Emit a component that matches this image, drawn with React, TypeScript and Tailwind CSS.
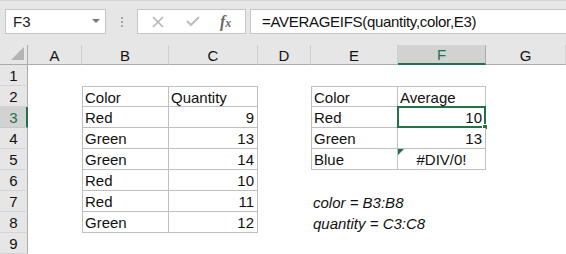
import React from "react";

const COLS = ["A", "B", "C", "D", "E", "F", "G"];
const ROWS = [1, 2, 3, 4, 5, 6, 7, 8, 9];

const font = { fontFamily: '"Liberation Sans", Arial, sans-serif' };

type Cell = {
  text?: string;
  align?: "left" | "right" | "center";
  head?: boolean;
  table?: boolean;
  first?: boolean;
  top?: boolean;
  italic?: boolean;
  selected?: boolean;
  flag?: boolean;
};

function buildCells(): Record<string, Cell> {
  const c: Record<string, Cell> = {};
  const left = [
    ["Color", "Quantity"],
    ["Red", "9"],
    ["Green", "13"],
    ["Green", "14"],
    ["Red", "10"],
    ["Red", "11"],
    ["Green", "12"],
  ];
  left.forEach((r, i) => {
    const row = i + 2;
    c["B" + row] = { text: r[0], align: "left", head: i === 0, table: true, first: true, top: i === 0 };
    c["C" + row] = { text: r[1], align: i === 0 ? "left" : "right", head: i === 0, table: true, top: i === 0 };
  });
  const right = [
    ["Color", "Average"],
    ["Red", "10"],
    ["Green", "13"],
    ["Blue", "#DIV/0!"],
  ];
  right.forEach((r, i) => {
    const row = i + 2;
    c["E" + row] = { text: r[0], align: "left", head: i === 0, table: true, first: true, top: i === 0 };
    c["F" + row] = {
      text: r[1],
      align: i === 0 ? "left" : i === 3 ? "center" : "right",
      head: i === 0,
      table: true,
      top: i === 0,
      selected: row === 3,
      flag: row === 5,
    };
  });
  c["E7"] = { text: "color = B3:B8", italic: true, align: "left" };
  c["E8"] = { text: "quantity = C3:C8", italic: true, align: "left" };
  return c;
}

export default function App() {
  const cells = buildCells();
  return (
    <div className="w-[566px] h-[254px] overflow-hidden bg-[#e6e6e6] text-black" style={font}>
      {/* formula bar */}
      <div className="h-[45px] flex items-start pt-[9px] pl-[5px] border-t border-[#d6d6d6]">
        <div className="w-[101px] h-[25px] bg-white border border-[#c6c6c6] flex items-center justify-between pl-[7px] pr-[5px] pt-[2px] -mt-px">
          <span className="text-[15px] text-[#222]">F3</span>
          <svg width="8" height="5" viewBox="0 0 8 5" className="-mt-[2px]">
            <path d="M0 0 L8 0 L4 4 Z" fill="#777" />
          </svg>
        </div>
        <div className="w-[31px] h-[25px] flex flex-col items-center justify-center gap-[2px] -mt-px">
          <span className="w-[2px] h-[2px] bg-[#a6a6a6]" />
          <span className="w-[2px] h-[2px] bg-[#a6a6a6]" />
          <span className="w-[2px] h-[2px] bg-[#a6a6a6]" />
        </div>
        <div className="w-[109px] h-[25px] bg-white border border-[#c6c6c6] flex items-center -mt-px">
          <svg className="ml-[14px]" width="12" height="12" viewBox="0 0 12 12">
            <path d="M1 1 L11 11 M11 1 L1 11" stroke="#b5b5b5" strokeWidth="1.6" />
          </svg>
          <svg className="ml-[22px]" width="14" height="11" viewBox="0 0 14 11">
            <path d="M1 5 L5 9 L13 1" stroke="#bdbdbd" strokeWidth="2" fill="none" />
          </svg>
          <span
            className="ml-[20px] text-[16px] italic font-bold text-[#6a6a6a]"
            style={{ fontFamily: '"Liberation Serif", "Times New Roman", serif' }}
          >
            f<span className="text-[12px]">x</span>
          </span>
        </div>
        <div className="ml-[4px] flex-1 h-[25px] bg-white border border-[#c6c6c6] border-r-0 flex items-center pl-[11px] pt-[2px] -mt-px">
          <span className="text-[15px] tracking-[-0.3px] text-[#111]">=AVERAGEIFS(quantity,color,E3)</span>
        </div>
      </div>

      {/* sheet grid */}
      <div
        className="grid"
        style={{
          gridTemplateColumns: "28px 54px 87px 89px 53px 87px 88px 80px",
          gridTemplateRows: "20px repeat(9, 21px)",
        }}
      >
        {/* corner */}
        <div className="bg-[#e6e6e6] border-r border-b border-[#ababab] relative">
          <svg className="absolute right-[3px] bottom-[4px]" width="13" height="13" viewBox="0 0 13 13">
            <path d="M13 0 L13 13 L0 13 Z" fill="#b4b4b4" />
          </svg>
        </div>
        {COLS.map((c) => (
          <div
            key={c}
            className={
              c === "F"
                ? "bg-[#d2d2d2] border-r border-[#ababab] border-b-2 border-b-[#217346] flex items-center justify-center text-[15px] text-[#217346] pt-[3px]"
                : "bg-[#e6e6e6] border-r border-[#d0d0d0] border-b border-b-[#ababab] flex items-center justify-center text-[15px] text-[#111] pt-[3px]"
            }
          >
            {c}
          </div>
        ))}

        {ROWS.map((r) => (
          <React.Fragment key={r}>
            <div
              className={
                r === 3
                  ? "bg-[#d2d2d2] border-r-2 border-[#217346] border-b border-b-[#c8c8c8] flex items-center justify-center text-[15px] text-[#217346] pl-[1px] pt-[3px]"
                  : "bg-[#e6e6e6] border-r border-[#ababab] border-b border-b-[#d4d4d4] flex items-center justify-center text-[15px] text-[#111] pt-[3px]"
              }
            >
              {r}
            </div>
            {COLS.map((c) => {
              const cell = cells[c + r];
              if (!cell) return <div key={c} className="bg-white" />;
              const cls = [
                "relative bg-white flex items-center text-[15px] whitespace-nowrap pt-[3px]",
                cell.table ? "border-r border-b border-[#bfbfbf]" : "",
                cell.table && cell.first ? "border-l" : "",
                cell.table && cell.top ? "border-t" : "",
                cell.head ? "bg-[#d9e1f2]" : "",
                cell.align === "right" ? "justify-end pr-[3px]" : cell.align === "center" ? "justify-center" : "pl-[2px]",
                cell.italic ? "italic" : "",
              ].join(" ");
              return (
                <div key={c} className={cls}>
                  <span className="text-[#111]">{cell.text}</span>
                  {cell.selected && (
                    <>
                      <div className="absolute -left-[1px] -top-[1px] -right-[1px] -bottom-[1px] border-2 border-[#217346] pointer-events-none" />
                      <div className="absolute -right-[3px] -bottom-[3px] w-[6px] h-[6px] bg-[#217346] border border-white" />
                    </>
                  )}
                  {cell.flag && (
                    <svg className="absolute left-0 top-0" width="6" height="6" viewBox="0 0 6 6">
                      <path d="M0 0 L6 0 L0 6 Z" fill="#217346" />
                    </svg>
                  )}
                </div>
              );
            })}
          </React.Fragment>
        ))}
      </div>
    </div>
  );
}
